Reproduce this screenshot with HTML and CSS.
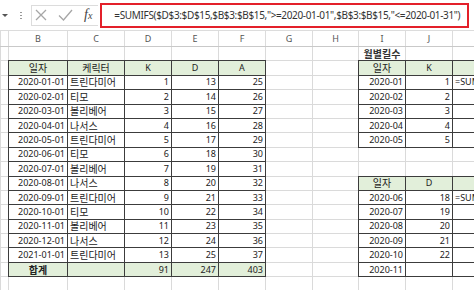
FILE: index.html
```html
<!DOCTYPE html>
<html lang="ko">
<head>
    <meta charset="UTF-8">
    <title>SUMIFS 월별 합계</title>
    <link rel="stylesheet" href="styles.css">
</head>
<body>
    <div class="formula-bar">
        <span class="name-drop"></span>
        <span class="grip"></span>
        <div class="fx-buttons">
            <svg class="btn-icon" width="12" height="12" viewBox="0 0 12 12"><path d="M1 1 L11 11 M11 1 L1 11" stroke="#a6a6a6" stroke-width="1.3" fill="none"/></svg>
            <svg class="btn-icon" width="15" height="12" viewBox="0 0 15 12"><path d="M1 6.5 L5.5 11 L14 1" stroke="#a6a6a6" stroke-width="1.3" fill="none"/></svg>
            <span class="fx">f<sub>x</sub></span>
        </div>
        <div class="formula">=SUMIFS($D$3:$D$15,$B$3:$B$15,"&gt;=2020-01-01",$B$3:$B$15,"&lt;=2020-01-31")</div>
    </div>

    <table class="sheet">
        <colgroup>
            <col class="c-a"><col class="c-b"><col class="c-c"><col class="c-n"><col class="c-n"><col class="c-n">
            <col class="c-n"><col class="c-h"><col class="c-n"><col class="c-n"><col class="c-k">
        </colgroup>
        <tr class="col-head">
            <th></th><th>B</th><th>C</th><th>D</th><th>E</th><th>F</th><th>G</th><th>H</th><th>I</th><th>J</th><th>K</th>
        </tr>
        <tr>
            <td></td><td></td><td></td><td></td><td></td><td></td><td></td><td></td><td class="label">월별킬수</td><td></td><td></td>
        </tr>
        <tr>
            <td></td><td class="t hd kr">일자</td><td class="t hd kr">케릭터</td><td class="t hd">K</td><td class="t hd">D</td><td class="t hd">A</td>
            <td></td><td></td><td class="t hd kr">일자</td><td class="t hd">K</td><td class="t hd"></td>
        </tr>
        <tr>
            <td></td><td class="t n">2020-01-01</td><td class="t kr">트린다미어</td><td class="t n">1</td><td class="t n">13</td><td class="t n">25</td>
            <td></td><td></td><td class="t n">2020-01</td><td class="t n">1</td><td class="t">=SUMIFS($D$3:$D$15,$B$3:$B$15</td>
        </tr>
        <tr>
            <td></td><td class="t n">2020-02-01</td><td class="t kr">티모</td><td class="t n">2</td><td class="t n">14</td><td class="t n">26</td>
            <td></td><td></td><td class="t n">2020-02</td><td class="t n">2</td><td class="t"></td>
        </tr>
        <tr>
            <td></td><td class="t n">2020-03-01</td><td class="t kr">볼리베어</td><td class="t n">3</td><td class="t n">15</td><td class="t n">27</td>
            <td></td><td></td><td class="t n">2020-03</td><td class="t n">3</td><td class="t"></td>
        </tr>
        <tr>
            <td></td><td class="t n">2020-04-01</td><td class="t kr">나서스</td><td class="t n">4</td><td class="t n">16</td><td class="t n">28</td>
            <td></td><td></td><td class="t n">2020-04</td><td class="t n">4</td><td class="t"></td>
        </tr>
        <tr>
            <td></td><td class="t n">2020-05-01</td><td class="t kr">트린다미어</td><td class="t n">5</td><td class="t n">17</td><td class="t n">29</td>
            <td></td><td></td><td class="t n">2020-05</td><td class="t n">5</td><td class="t"></td>
        </tr>
        <tr>
            <td></td><td class="t n">2020-06-01</td><td class="t kr">티모</td><td class="t n">6</td><td class="t n">18</td><td class="t n">30</td>
            <td></td><td></td><td></td><td></td><td></td>
        </tr>
        <tr>
            <td></td><td class="t n">2020-07-01</td><td class="t kr">볼리베어</td><td class="t n">7</td><td class="t n">19</td><td class="t n">31</td>
            <td></td><td></td><td></td><td></td><td></td>
        </tr>
        <tr>
            <td></td><td class="t n">2020-08-01</td><td class="t kr">나서스</td><td class="t n">8</td><td class="t n">20</td><td class="t n">32</td>
            <td></td><td></td><td class="t hd kr">일자</td><td class="t hd">D</td><td class="t hd"></td>
        </tr>
        <tr>
            <td></td><td class="t n">2020-09-01</td><td class="t kr">트린다미어</td><td class="t n">9</td><td class="t n">21</td><td class="t n">33</td>
            <td></td><td></td><td class="t n">2020-06</td><td class="t n">18</td><td class="t">=SUMIFS($E$3:$E$15,$B$3:$B$15</td>
        </tr>
        <tr>
            <td></td><td class="t n">2020-10-01</td><td class="t kr">티모</td><td class="t n">10</td><td class="t n">22</td><td class="t n">34</td>
            <td></td><td></td><td class="t n">2020-07</td><td class="t n">19</td><td class="t"></td>
        </tr>
        <tr>
            <td></td><td class="t n">2020-11-01</td><td class="t kr">볼리베어</td><td class="t n">11</td><td class="t n">23</td><td class="t n">35</td>
            <td></td><td></td><td class="t n">2020-08</td><td class="t n">20</td><td class="t"></td>
        </tr>
        <tr>
            <td></td><td class="t n">2020-12-01</td><td class="t kr">나서스</td><td class="t n">12</td><td class="t n">24</td><td class="t n">36</td>
            <td></td><td></td><td class="t n">2020-09</td><td class="t n">21</td><td class="t"></td>
        </tr>
        <tr>
            <td></td><td class="t n">2021-01-01</td><td class="t kr">트린다미어</td><td class="t n">13</td><td class="t n">25</td><td class="t n">37</td>
            <td></td><td></td><td class="t n">2020-10</td><td class="t n">22</td><td class="t"></td>
        </tr>
        <tr>
            <td></td><td class="t hd kr total">합계</td><td class="t hd"></td><td class="t hd n">91</td><td class="t hd n">247</td><td class="t hd n">403</td>
            <td></td><td></td><td class="t n">2020-11</td><td class="t n"></td><td class="t"></td>
        </tr>
        <tr>
            <td></td><td></td><td></td><td></td><td></td><td></td><td></td><td></td><td></td><td></td><td></td>
        </tr>
    </table>
</body>
</html>
```

FILE: styles.css
```css
body {
    margin: 0;
    width: 474px;
    height: 290px;
    overflow: hidden;
    background-color: #fff;
    font-family: "Noto Sans", "Noto Sans CJK KR", sans-serif;
    color: #222;
}
.formula-bar {
    display: flex;
    align-items: center;
    height: 30px;
    padding-left: 2px;
}
.name-drop {
    width: 0;
    height: 0;
    border-left: 3px solid transparent;
    border-right: 3px solid transparent;
    border-top: 3px solid #555;
}
.grip {
    width: 2px;
    height: 8px;
    margin-left: 12px;
    background: radial-gradient(circle, #999 0.8px, transparent 1px) 0 0 / 2px 3px;
}
.fx-buttons {
    display: flex;
    align-items: center;
    gap: 11px;
    height: 19px;
    margin-left: 9px;
    padding: 0 6px 0 3px;
    border: 1px solid #dcdcdc;
    border-right: none;
}
.fx {
    font-family: "Liberation Serif", serif;
    font-style: italic;
    font-size: 14px;
    color: #444;
}
.fx sub {
    font-size: 10px;
    vertical-align: 0;
}
.formula {
    width: 369px;
    height: 25px;
    margin-left: 2px;
    padding-left: 12px;
    border: 2px solid #e3202a;
    box-sizing: border-box;
    font-size: 10px;
    letter-spacing: -0.35px;
    line-height: 21px;
    color: #333;
    white-space: nowrap;
    overflow: hidden;
}
.sheet {
    border-collapse: collapse;
    table-layout: fixed;
    width: 522px;
    font-size: 9px;
}
.c-a { width: 8px; }
.c-b { width: 59px; }
.c-c { width: 57px; }
.c-n { width: 47px; }
.c-h { width: 46px; }
.c-k { width: 70px; }
.sheet th,
.sheet td {
    border: 1px solid #dadada;
    padding: 0 2px;
    height: 13.4px;
    line-height: 12px;
    white-space: nowrap;
}
.col-head th {
    height: 15px;
    font-weight: normal;
    font-size: 9px;
    color: #555;
    border-color: #dcdcdc;
    border-bottom-color: #c9c9c9;
}
.sheet .t {
    border: 1px double #3c3c3c;
}
.hd {
    background-color: #e2efda;
    text-align: center;
}
.n {
    text-align: right;
}
.kr {
    font-size: 10px;
}
.label {
    font-size: 10px;
    font-weight: bold;
    text-align: center;
    color: #333;
}
.total {
    font-weight: bold;
}
```
